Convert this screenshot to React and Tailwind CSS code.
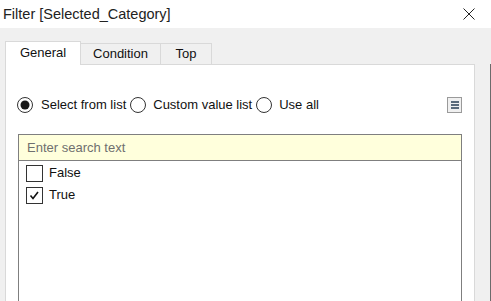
import { useState } from "react";

const FONT = { fontFamily: '"Liberation Sans", Arial, sans-serif' };

// radio circle, filled when checked
function Radio({ checked }) {
  return (
    <svg width="16" height="16" viewBox="0 0 16 16" className="shrink-0">
      <circle cx="8" cy="8" r="7.5" fill="#fff" stroke="#333" strokeWidth="1" />
      {checked && <circle cx="8" cy="8" r="4.5" fill="#1a1a1a" />}
    </svg>
  );
}

function Checkbox({ checked }) {
  return (
    <div className="w-[17px] h-[17px] border border-[#333] bg-white flex items-center justify-center shrink-0">
      {checked && (
        <svg width="11" height="11" viewBox="0 0 11 11">
          <path d="M1.5 5.5 L4 8.5 L9 2" fill="none" stroke="#111" strokeWidth="1.6" />
        </svg>
      )}
    </div>
  );
}

export default function App() {
  const [mode, setMode] = useState("list");
  const [values, setValues] = useState({ False: false, True: true });

  return (
    <div
      className="w-[491px] h-[301px] overflow-hidden flex flex-col bg-white text-[#111]"
      style={FONT}
    >
      {/* title bar */}
      <div className="h-[28px] shrink-0 flex items-center justify-between pl-[3px] pr-[16px]">
        <span className="text-[14.5px] text-[#222] leading-none">Filter [Selected_Category]</span>
        <svg width="12" height="12" viewBox="0 0 12 12">
          <path d="M0.5 0.5 L11.5 11.5 M11.5 0.5 L0.5 11.5" stroke="#222" strokeWidth="1" />
        </svg>
      </div>

      <div className="flex-1 min-h-0 flex bg-[#f0f0f0]">
        <div className="w-[490px] pt-[13px] pl-[5px] flex flex-col">
          {/* tabs */}
          <div className="flex items-end h-[23px] text-[13px] relative z-10">
            <div className="w-[76px] h-[24px] -mb-px bg-white border border-b-0 border-[#d9d9d9] flex items-center justify-center pb-[2px]">
              General
            </div>
            <div className="w-[80px] h-[21px] border-t border-r border-[#d9d9d9] flex items-center justify-center">
              Condition
            </div>
            <div className="w-[51px] h-[21px] border-t border-r border-[#d9d9d9] flex items-center justify-center">
              Top
            </div>
          </div>

          {/* panel */}
          <div className="w-[470px] flex-1 bg-white border border-b-0 border-[#d9d9d9] px-[12px] pt-[32px] flex flex-col">
            <div className="flex items-center h-[16px] text-[13px] -ml-px">
              <label className="flex items-center cursor-pointer" onClick={() => setMode("list")}>
                <Radio checked={mode === "list"} />
                <span className="ml-[8px] mr-[4px]">Select from list</span>
              </label>
              <label className="flex items-center cursor-pointer" onClick={() => setMode("custom")}>
                <Radio checked={mode === "custom"} />
                <span className="ml-[7px] mr-[4px]">Custom value list</span>
              </label>
              <label className="flex items-center cursor-pointer" onClick={() => setMode("all")}>
                <Radio checked={mode === "all"} />
                <span className="ml-[7px]">Use all</span>
              </label>
              <div className="ml-auto w-[15px] h-[16px] border border-[#9a9a9a] bg-[#f0f0f0] flex flex-col items-center justify-center gap-[1px]">
                <div className="w-[8px] h-[2px] bg-[#5b6b7b]" />
                <div className="w-[8px] h-[2px] bg-[#5b6b7b]" />
                <div className="w-[8px] h-[2px] bg-[#5b6b7b]" />
              </div>
            </div>

            {/* list box */}
            <div className="mt-[21px] flex-1 border border-b-0 border-[#7f7f7f] flex flex-col">
              <div className="h-[26px] shrink-0 bg-[#ffffdc] border-b border-[#7f7f7f] flex items-center pl-[8px] text-[13px] text-[#6f6f6f]">
                Enter search text
              </div>
              <div className="pt-[1px] pl-[7px] flex flex-col text-[13px]">
                {Object.keys(values).map((k) => (
                  <div
                    key={k}
                    className="h-[22px] flex items-center cursor-pointer"
                    onClick={() => setValues({ ...values, [k]: !values[k] })}
                  >
                    <Checkbox checked={values[k]} />
                    <span className="ml-[6px]">{k}</span>
                  </div>
                ))}
              </div>
            </div>
          </div>
        </div>
        <div className="w-px mt-[36px] bg-[#6b6b6b]" />
      </div>
    </div>
  );
}
